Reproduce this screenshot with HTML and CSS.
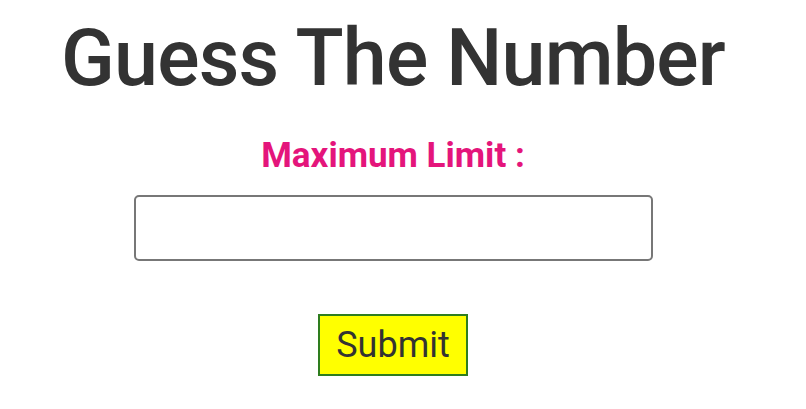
FILE: index.html
```html
<!DOCTYPE html>
<html lang="en">
<head>
    <meta charset="UTF-8">
    <meta name="viewport" content="width=device-width, initial-scale=1.0">
    <title>Guess The Number</title>
    <link rel="stylesheet" href="styles.css">
</head>
<body>
    <div class="container">
        <h1 class="title">Guess The Number</h1>
        <label class="limit-label" for="max-input">Maximum Limit :</label>
        <input type="text" id="max-input" class="limit-input">
        <button class="btn" id="submit-btn">Submit</button>
    </div>
</body>
</html>
```

FILE: styles.css
```css
/* General Styles */
body {
    font-family: Roboto, "Noto Sans", sans-serif;
    background-color: #fff;
    margin: 0;
    padding: 0;
    color: #333;
}

/* Main container */
.container {
    display: flex;
    flex-direction: column;
    align-items: center;
    padding-top: 12px;
    padding-right: 20px;
}

.title {
    font-size: 79px;
    font-weight: 500;
    letter-spacing: -0.8px;
    color: #333;
    margin: 0;
    line-height: 1.172;
}

.limit-label {
    font-size: 35px;
    font-weight: 700;
    color: #e4157b;
    margin-top: 30px;
    line-height: 1.172;
}

.limit-input {
    width: 519px;
    height: 66px;
    box-sizing: border-box;
    margin-top: 19px;
    border: 2px solid #777;
    border-radius: 5px;
    font-size: 30px;
    padding: 0 12px;
}

.btn {
    margin-top: 53px;
    padding: 8px 16px;
    font-family: Roboto, sans-serif;
    font-size: 36px;
    line-height: 1.172;
    color: #333;
    background-color: #ffff00;
    border: 2px solid #2e7d1e;
    border-radius: 0;
    cursor: pointer;
}
```
